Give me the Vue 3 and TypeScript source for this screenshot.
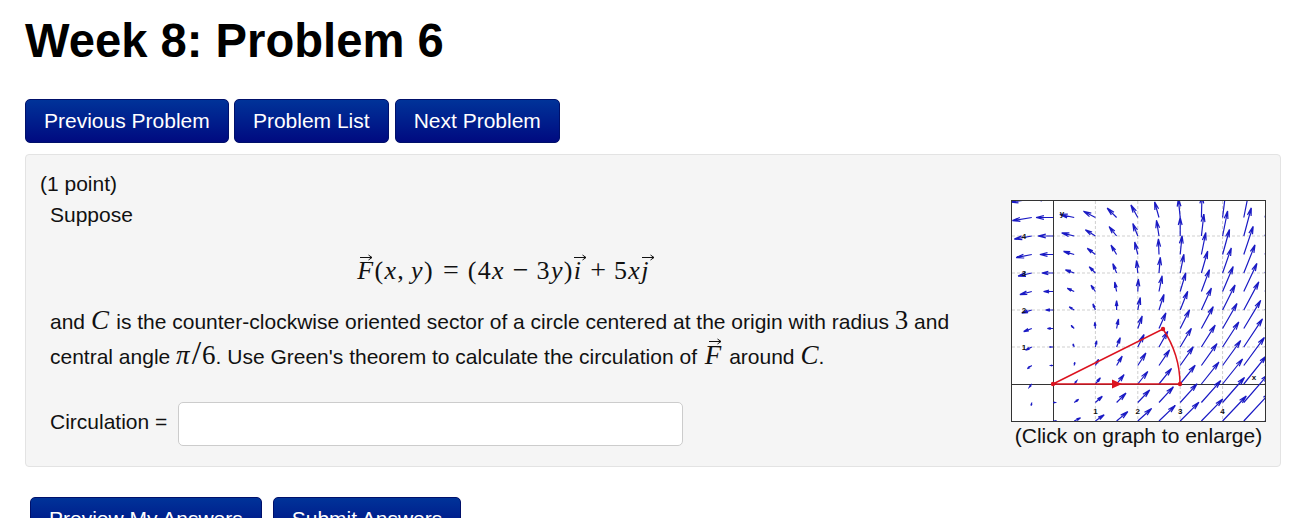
<script setup lang="ts">
interface Arrow { id: string; d: string }
const ox = 42, oy = 184, ux = 42.4, uy = 37
const arrows: Arrow[] = []
for (let i = -2; i <= 12; i++) {
  for (let j = -2; j <= 10; j++) {
    const x = i / 2, y = j / 2
    const fx = (4 * x - 3 * y) * 1.25, fy = 5 * x * 1.25
    const sx = ox + x * ux, sy = oy - y * uy
    const ex = sx + fx, ey = sy - fy
    const len = Math.hypot(fx, fy)
    if (len < 0.5) continue
    const hl = Math.min(8, len * 0.6)
    const a = Math.atan2(-fy, fx)
    const h1x = ex - hl * Math.cos(a - 0.24), h1y = ey - hl * Math.sin(a - 0.24)
    const h2x = ex - hl * Math.cos(a + 0.24), h2y = ey - hl * Math.sin(a + 0.24)
    const f = (n: number) => n.toFixed(1)
    arrows.push({
      id: `${i}-${j}`,
      d: `M${f(sx)} ${f(sy)}L${f(ex)} ${f(ey)}M${f(h1x)} ${f(h1y)}L${f(ex)} ${f(ey)}L${f(h2x)} ${f(h2y)}`
    })
  }
}
const vLines = [84.4, 126.8, 169.2, 211.6]
const hLines = [147, 110, 73, 36]
const xLabels = [{ t: '1', x: 84.4 }, { t: '2', x: 126.8 }, { t: '3', x: 169.2 }, { t: '4', x: 211.6 }]
const yLabels = [{ t: '1', y: 147 }, { t: '2', y: 110 }, { t: '3', y: 73 }, { t: '4', y: 36 }]
</script>

<template>
  <div class="page">
    <h1 class="title">Week 8: Problem 6</h1>
    <nav class="nav">
      <button class="btn">Previous Problem</button>
      <button class="btn">Problem List</button>
      <button class="btn">Next Problem</button>
    </nav>
    <section class="panel">
      <div class="point">(1 point)</div>
      <div class="body">
        <div class="main">
          <p class="suppose">Suppose</p>
          <div class="equation">
            <span class="vec"><i>F</i><svg class="arrow" viewBox="0 0 14 7"><path d="M1 3.5H13M9.5 1L13 3.5L9.5 6" /></svg></span><span class="m">(</span><i>x</i><span class="m">,</span><i class="sp">y</i><span class="m">)</span><span class="rel">=</span><span class="m">(4</span><i>x</i><span class="bin">−</span><span class="m">3</span><i>y</i><span class="m">)</span><span class="vec vec-i"><i>i</i><svg class="arrow" viewBox="0 0 14 7"><path d="M1 3.5H13M9.5 1L13 3.5L9.5 6" /></svg></span><span class="bin">+</span><span class="m">5</span><i>x</i><span class="vec vec-j"><i>j</i><svg class="arrow" viewBox="0 0 14 7"><path d="M1 3.5H13M9.5 1L13 3.5L9.5 6" /></svg></span>
          </div>
          <p class="para">
            and <span class="math c-first"><i>C</i></span> is the counter-clockwise oriented sector of a circle centered at the origin with radius <span class="math">3</span> and<br />
            central angle <span class="math"><i>π</i><span class="slash">/</span>6</span>. Use Green's theorem to calculate the circulation of <span class="math vec para-vec"><i>F</i><svg class="arrow para-arrow" viewBox="0 0 14 7"><path d="M1 3.5H13M9.5 1L13 3.5L9.5 6" /></svg></span> around <span class="math"><i>C</i></span>.
          </p>
          <div class="answer">
            <label class="label" for="circ">Circulation =</label>
            <input id="circ" class="input" type="text" />
          </div>
        </div>
        <figure class="figure">
          <svg class="graph" width="255" height="222" viewBox="0 0 255 222">
            <rect x="0.5" y="0.5" width="254" height="221" fill="#fff" />
            <g stroke="#cfcfcf" stroke-dasharray="3 2" fill="none">
              <line v-for="x in vLines" :key="'v' + x" :x1="x" :x2="x" y1="1" y2="221" />
              <line v-for="y in hLines" :key="'h' + y" :y1="y" :y2="y" x1="1" x2="254" />
            </g>
            <line x1="42.5" x2="42.5" y1="1" y2="221" stroke="#333" />
            <line x1="1" x2="254" y1="184.5" y2="184.5" stroke="#333" />
            <g stroke="#1a1ac4" stroke-width="1.2" fill="none">
              <path v-for="a in arrows" :key="a.id" :d="a.d" />
            </g>
            <g class="tick">
              <text v-for="l in xLabels" :key="'x' + l.t" :x="l.x" y="214" text-anchor="middle">{{ l.t }}</text>
              <text v-for="l in yLabels" :key="'y' + l.t" x="13" :y="l.y + 3" text-anchor="middle">{{ l.t }}</text>
              <text x="51" y="16" text-anchor="middle">y</text>
              <text x="243" y="180" text-anchor="middle">x</text>
            </g>
            <path d="M42 184L169 184A127 111 0 0 0 152 129L42 184Z" fill="none" stroke="#dc1420" stroke-width="1.5" />
            <path d="M101 179.5L111 184L101 188.5Z" fill="#dc1420" />
            <g fill="#dc1420">
              <circle cx="42" cy="184" r="2.2" />
              <circle cx="169" cy="184" r="2.2" />
              <circle cx="152" cy="129" r="2.2" />
            </g>
            <rect x="0.5" y="0.5" width="254" height="221" fill="none" stroke="#333" />
          </svg>
          <figcaption class="caption">(Click on graph to enlarge)</figcaption>
        </figure>
      </div>
    </section>
    <div class="actions">
      <button class="btn">Preview My Answers</button>
      <button class="btn">Submit Answers</button>
    </div>
  </div>
</template>

<style>
html, body { margin: 0; height: 518px; overflow: hidden; background: #fff; }
</style>

<style scoped>
.page {
  padding: 0 20px 0 25px;
  font-family: "Liberation Sans", Arial, sans-serif;
  font-size: 21px;
  line-height: 31px;
  color: #111;
}
.title {
  margin: 0;
  padding-top: 15px;
  font-size: 47.2px;
  line-height: 52px;
  font-weight: 700;
  color: #000;
}
.nav { display: flex; gap: 5px; margin-top: 32px; }
.btn {
  height: 44px;
  padding: 0 18px;
  border: 1px solid #00106a;
  border-radius: 5px;
  background: linear-gradient(#003399, #000a80);
  color: #fff;
  font: 21px/24px "Liberation Sans", Arial, sans-serif;
  white-space: nowrap;
}
.nav .btn:nth-child(2) { width: 155px; padding: 0; }
.nav .btn:nth-child(3) { margin-left: 1px; width: 165px; padding: 0; }
.panel {
  margin-top: 11px;
  width: 1256px;
  height: 313px;
  box-sizing: border-box;
  padding: 13px 14px 0 14px;
  background: #f5f5f5;
  border: 1px solid #e3e3e3;
  border-radius: 4px;
}
.point { height: 31px; }
.body { display: flex; justify-content: space-between; }
.main { width: 910px; padding-left: 10px; }
.suppose { margin: 0; }
.equation {
  margin-top: 25px;
  height: 32px;
  display: flex;
  justify-content: center;
  align-items: baseline;
  padding-right: 3px;
  font-family: "Liberation Serif", "Times New Roman", serif;
  font-size: 26px;
  line-height: 32px;
  letter-spacing: 1.3px;
}
.equation .sp { margin-left: 6px; }
.rel { margin: 0 9px; font-size: 28px; line-height: 20px; letter-spacing: 0; }
.bin { margin: 0 8px; font-size: 28px; line-height: 20px; letter-spacing: 0; }
.vec { position: relative; display: inline-block; }
.arrow {
  position: absolute;
  left: 2px;
  top: -1px;
  width: 14px;
  height: 7px;
  fill: none;
  stroke: #111;
  stroke-width: 1;
}
.arrow.para-arrow { left: 3px; top: -7px; }
.vec-i .arrow { left: -1px; }
.vec-j .arrow { left: 0; }
.para { margin: 17px 0 0; line-height: 35px; }
.math {
  font-family: "Liberation Serif", "Times New Roman", serif;
  font-size: 27px;
  line-height: 20px;
}
.c-first { margin-right: 1.5px; }
.para-vec { margin: 0 2px; }
.slash { font-size: 34px; line-height: 20px; margin: 0 1px 0 2px; }
.answer { display: flex; align-items: center; gap: 11px; margin-top: 28px; }
.label { padding-bottom: 6px; }
.input {
  width: 505px;
  height: 44px;
  box-sizing: border-box;
  background: #fff;
  border: 1px solid #ccc;
  border-radius: 5px;
}
.figure { margin: 1px 0 0; width: 255px; display: flex; flex-direction: column; align-items: center; }
.graph { display: block; }
.tick { font: 700 8px "Liberation Sans", Arial, sans-serif; fill: #111; }
.caption { white-space: nowrap; line-height: 27px; }
.actions { display: flex; gap: 11px; margin: 30px 0 0 5px; }
</style>
